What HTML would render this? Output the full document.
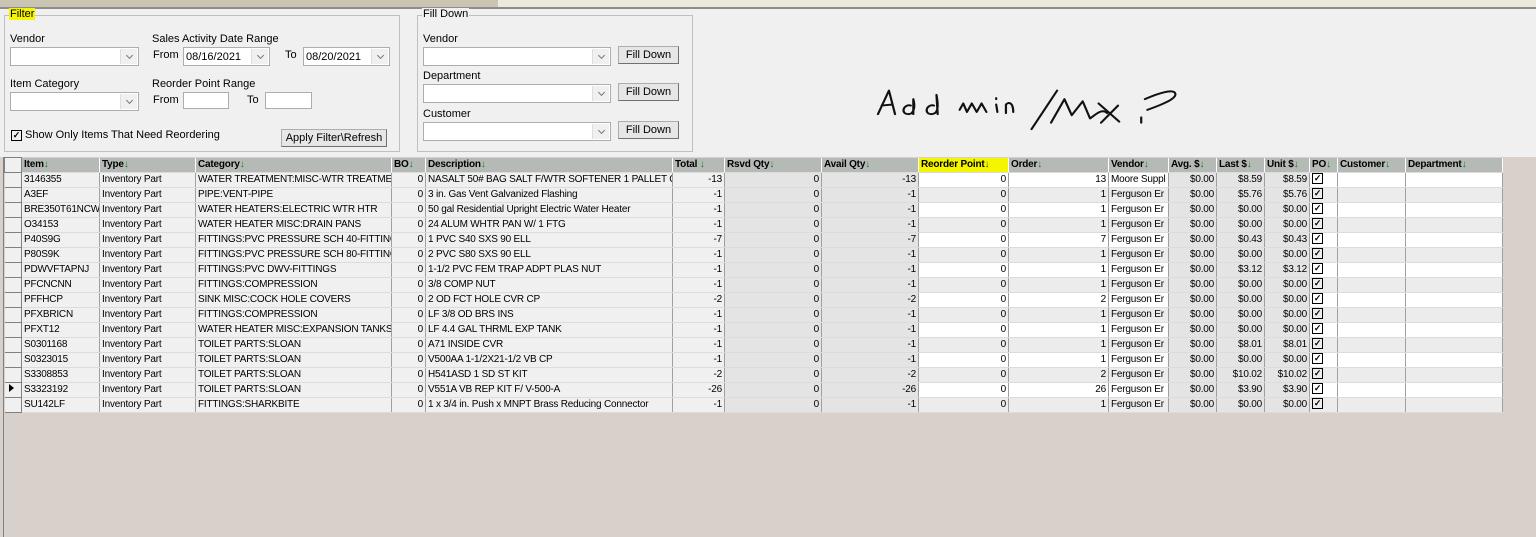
<!DOCTYPE html>
<html><head><meta charset="utf-8"><style>
*{box-sizing:border-box;margin:0;padding:0}
body{width:1536px;height:537px;overflow:hidden;background:#d8d0ca;font-family:"Liberation Sans",sans-serif;font-size:11px;color:#000;position:relative}
.top{position:absolute;left:0;top:0;width:1536px;height:8px;background:#ebe9dc}
.top .l{position:absolute;left:0;top:0;width:498px;height:7px;background:#c9c5b2}
.top .ln{position:absolute;left:0;top:7px;width:1536px;height:2px;background:#8c8c8c}
.panel{position:absolute;left:0;top:9px;width:1536px;height:148px;background:#f0f0f0}
.gb{position:absolute;border:1px solid #bfbfbf}
.gt{position:absolute;background:#f0f0f0;padding:0 1px;font-size:11px;top:-8px}
.a{position:absolute;font-size:11px;white-space:nowrap}
.cb{position:absolute;height:19px;background:#fff;border:1px solid #abadb3}
.cb::after{content:"";position:absolute;right:1px;top:1px;width:16px;height:15px;border-left:1px solid #ddd;background:#f0f0f0}
.cb::before{content:"";position:absolute;right:6px;top:5px;width:4px;height:4px;border-right:1px solid #777;border-bottom:1px solid #777;transform:rotate(45deg);z-index:2}
.tb{position:absolute;height:17px;background:#fff;border:1px solid #abadb3}
.btn{position:absolute;height:18px;background:#e6e6e6;border:1px solid #adadad;border-right-color:#707070;border-bottom-color:#707070;text-align:center;line-height:16px;font-size:11px}
.vl{position:absolute;left:3px;top:157px;width:1px;height:380px;background:#808080}
table{position:absolute;left:4px;top:157px;width:1498px;border-collapse:collapse;table-layout:fixed;font-size:10px;letter-spacing:-0.2px}
td,th{height:15px;padding:0 2px;white-space:nowrap;overflow:hidden;border-right:1px solid #a0a0a0;border-bottom:1px solid #dcdcdc;line-height:14px}
th{background:#b6bab6;text-align:left;font-weight:bold;border-right:1px solid #fff;height:14px}
th i{font-style:normal;color:#1a7a1a;font-weight:normal}
td.r{text-align:right}
td.g{background:#f0f0f0}
td.d{background:#e4e4e4}
tr.o td.w{background:#fff} tr.e td.w{background:#ececec}
td.h{background:#f0f0f0;border-right:1px solid #808080;border-bottom:1px solid #808080;padding:0}
.chk{display:inline-block;width:11px;height:11px;border:1.5px solid #000;font-size:9px;line-height:8px;text-align:center;font-weight:bold;vertical-align:middle}
</style></head><body>
<div class="top"><div class="l"></div><div class="ln"></div></div>
<div class="panel">
 <div class="gb" style="left:4px;top:6px;width:396px;height:137px">
  <div class="gt" style="left:4px;background:#f5f500">Filter</div>
 </div>
 <div class="a" style="left:10px;top:24px">Vendor</div>
 <div class="cb" style="left:10px;top:38px;width:129px"></div>
 <div class="a" style="left:10px;top:69px">Item Category</div>
 <div class="cb" style="left:10px;top:83px;width:129px"></div>
 <div class="a" style="left:152px;top:24px">Sales Activity Date Range</div>
 <div class="a" style="left:153px;top:40px">From</div>
 <div class="cb" style="left:183px;top:38px;width:87px;padding:3px 2px">08/16/2021</div>
 <div class="a" style="left:285px;top:40px">To</div>
 <div class="cb" style="left:303px;top:38px;width:87px;padding:3px 2px">08/20/2021</div>
 <div class="a" style="left:152px;top:69px">Reorder Point Range</div>
 <div class="a" style="left:153px;top:85px">From</div>
 <div class="tb" style="left:183px;top:83px;width:46px"></div>
 <div class="a" style="left:247px;top:85px">To</div>
 <div class="tb" style="left:265px;top:83px;width:47px"></div>
 <div class="a" style="left:11px;top:120px"><span class="chk" style="width:11px;height:11px;border-width:1px">✓</span> Show Only Items That Need Reordering</div>
 <div class="btn" style="left:281px;top:120px;width:106px">Apply Filter\Refresh</div>
 <div class="gb" style="left:417px;top:6px;width:276px;height:137px">
  <div class="gt" style="left:4px">Fill Down</div>
 </div>
 <div class="a" style="left:423px;top:24px">Vendor</div>
 <div class="cb" style="left:423px;top:38px;width:188px"></div>
 <div class="btn" style="left:618px;top:37px;width:61px">Fill Down</div>
 <div class="a" style="left:423px;top:61px">Department</div>
 <div class="cb" style="left:423px;top:75px;width:188px"></div>
 <div class="btn" style="left:618px;top:74px;width:61px">Fill Down</div>
 <div class="a" style="left:423px;top:99px">Customer</div>
 <div class="cb" style="left:423px;top:113px;width:188px"></div>
 <div class="btn" style="left:618px;top:112px;width:61px">Fill Down</div>
 <svg style="position:absolute;left:867px;top:58px" width="390" height="75" viewBox="0 0 320 70" preserveAspectRatio="none" fill="none" stroke="#111" stroke-width="1.8" stroke-linecap="round" stroke-linejoin="round">
  <path d="M9 44 L18 22 L23 44 M12 36 L21 35"/>
  <path d="M36 36 C30 34 27 44 34 44 C38 44 40 38 38 30 L38 44"/>
  <path d="M55 36 C49 34 46 44 53 44 C58 44 59 38 57 26 L58 44"/>
  <path d="M76 40 L79 34 L82 42 L86 34 L90 42 L94 34 L98 42"/>
  <path d="M106 35 L107 42 M106 29 L106 30"/>
  <path d="M114 43 L114 35 C117 32 120 34 120 42"/>
  <path d="M135 58 L156 22"/>
  <path d="M151 52 L162 30 L168 45 L177 32 L183 48 C187 45 193 38 197 43"/>
  <path d="M190 34 L207 51 M206 36 L192 52"/>
  <path d="M225 52 L225 47"/>
  <path d="M228 30 C240 24 252 20 253 25 C254 30 240 36 230 40"/>
 </svg>
</div>
<div class="vl"></div>
<table>
<colgroup><col style="width:17px"><col style="width:78px"><col style="width:96px"><col style="width:196px"><col style="width:34px"><col style="width:247px"><col style="width:52px"><col style="width:97px"><col style="width:97px"><col style="width:90px"><col style="width:100px"><col style="width:60px"><col style="width:48px"><col style="width:48px"><col style="width:45px"><col style="width:28px"><col style="width:68px"><col style="width:97px"></colgroup>
<tr><th style="background:#f0f0f0;border:1px solid #808080"></th><th>Item<i>↓</i></th><th>Type<i>↓</i></th><th>Category<i>↓</i></th><th>BO<i>↓</i></th><th>Description<i>↓</i></th><th>Total <i>↓</i></th><th>Rsvd Qty<i>↓</i></th><th>Avail Qty<i>↓</i></th><th style="background:#f5f500">Reorder Point<i>↓</i></th><th>Order<i>↓</i></th><th>Vendor<i>↓</i></th><th>Avg. $<i>↓</i></th><th>Last $<i>↓</i></th><th>Unit $<i>↓</i></th><th>PO<i>↓</i></th><th>Customer<i>↓</i></th><th>Department<i>↓</i></th></tr>
<tbody id="b"></tbody>
</table>
<script>
var d=[["3146355","WATER TREATMENT:MISC-WTR TREATME","NASALT 50# BAG SALT F/WTR SOFTENER 1 PALLET C",-13,"Moore Suppl","8.59","8.59"],
["A3EF","PIPE:VENT-PIPE","3 in. Gas Vent Galvanized Flashing",-1,"Ferguson Er","5.76","5.76"],
["BRE350T61NCW","WATER HEATERS:ELECTRIC WTR HTR","50 gal Residential Upright Electric Water Heater",-1,"Ferguson Er","0.00","0.00"],
["O34153","WATER HEATER MISC:DRAIN PANS","24 ALUM WHTR PAN W/ 1 FTG",-1,"Ferguson Er","0.00","0.00"],
["P40S9G","FITTINGS:PVC PRESSURE SCH 40-FITTING","1 PVC S40 SXS 90 ELL",-7,"Ferguson Er","0.43","0.43"],
["P80S9K","FITTINGS:PVC PRESSURE SCH 80-FITTING","2 PVC S80 SXS 90 ELL",-1,"Ferguson Er","0.00","0.00"],
["PDWVFTAPNJ","FITTINGS:PVC DWV-FITTINGS","1-1/2 PVC FEM TRAP ADPT PLAS NUT",-1,"Ferguson Er","3.12","3.12"],
["PFCNCNN","FITTINGS:COMPRESSION","3/8 COMP NUT",-1,"Ferguson Er","0.00","0.00"],
["PFFHCP","SINK MISC:COCK HOLE COVERS","2 OD FCT HOLE CVR CP",-2,"Ferguson Er","0.00","0.00"],
["PFXBRICN","FITTINGS:COMPRESSION","LF 3/8 OD BRS INS",-1,"Ferguson Er","0.00","0.00"],
["PFXT12","WATER HEATER MISC:EXPANSION TANKS","LF 4.4 GAL THRML EXP TANK",-1,"Ferguson Er","0.00","0.00"],
["S0301168","TOILET PARTS:SLOAN","A71 INSIDE CVR",-1,"Ferguson Er","8.01","8.01"],
["S0323015","TOILET PARTS:SLOAN","V500AA 1-1/2X21-1/2 VB CP",-1,"Ferguson Er","0.00","0.00"],
["S3308853","TOILET PARTS:SLOAN","H541ASD 1 SD ST KIT",-2,"Ferguson Er","10.02","10.02"],
["S3323192","TOILET PARTS:SLOAN","V551A VB REP KIT F/ V-500-A",-26,"Ferguson Er","3.90","3.90"],
["SU142LF","FITTINGS:SHARKBITE","1 x 3/4 in. Push x MNPT Brass Reducing Connector",-1,"Ferguson Er","0.00","0.00"]];
var h="";d.forEach(function(r,i){h+='<tr class="'+(i%2?'e':'o')+'"><td class="h">'+(i==14?'<span style="display:inline-block;margin-left:4px;border-left:5px solid #000;border-top:4px solid transparent;border-bottom:4px solid transparent"></span>':'')+'</td><td class="g">'+r[0]+'</td><td class="g">Inventory Part</td><td class="g">'+r[1]+'</td><td class="g r">0</td><td class="g">'+r[2]+'</td><td class="g r">'+r[3]+'</td><td class="d r">0</td><td class="d r">'+r[3]+'</td><td class="w r">0</td><td class="w r">'+(-r[3])+'</td><td class="w">'+r[4]+'</td><td class="d r">$0.00</td><td class="d r">$'+r[5]+'</td><td class="d r">$'+r[6]+'</td><td class="w"><span class="chk">✓</span></td><td class="w"></td><td class="w"></td></tr>'});
document.getElementById("b").innerHTML=h;
</script>
</body></html>
